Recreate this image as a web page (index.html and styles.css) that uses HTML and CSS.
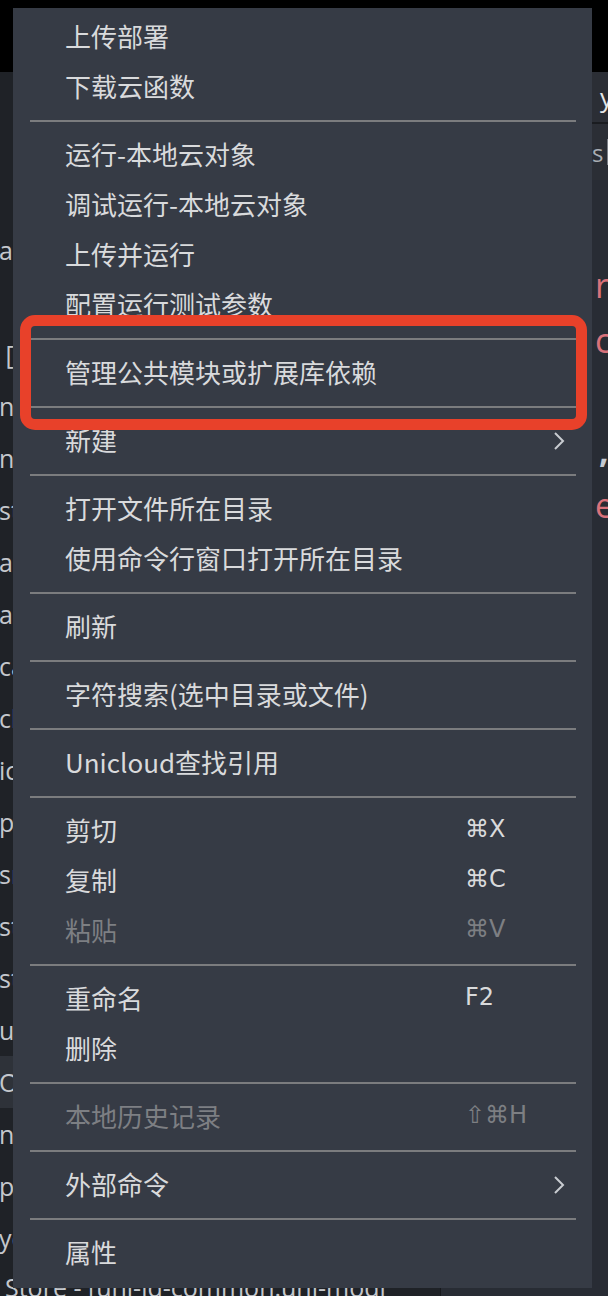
FILE: index.html
```html
<!DOCTYPE html>
<html lang="zh-CN">
<head>
  <meta charset="UTF-8" />
  <meta name="viewport" content="width=device-width, initial-scale=1" />
  <title>项目管理器 - 右键菜单</title>
  <link rel="stylesheet" href="styles.css">
</head>
<body>

  <div class="titlebar"></div>

  <main class="workspace">
    <aside class="project-tree">
      <div class="tree-row"></div>
      <div class="tree-row"></div>
      <div class="tree-row">api</div>
      <div class="tree-row"></div>
      <div class="tree-row">&nbsp;[uni-id-co]</div>
      <div class="tree-row">node_modules</div>
      <div class="tree-row">nodejs</div>
      <div class="tree-row">static</div>
      <div class="tree-row">articles</div>
      <div class="tree-row">app.vue</div>
      <div class="tree-row">cache</div>
      <div class="tree-row">client</div>
      <div class="tree-row">icons</div>
      <div class="tree-row">pages</div>
      <div class="tree-row">sıtemap</div>
      <div class="tree-row">store</div>
      <div class="tree-row">styles</div>
      <div class="tree-row">uni_modules</div>
      <div class="tree-row selected">Order</div>
      <div class="tree-row">node</div>
      <div class="tree-row">package.json</div>
      <div class="tree-row">yconfig</div>
      <div class="tree-row status-row">Store - [uni-id-common:uni-modi</div>
    </aside>

    <section class="editor">
      <div class="editor-tabs"><span class="tab-label">y</span></div>
      <div class="editor-crumbs"><span class="crumb-label">s</span><span class="crumb-box"></span></div>
      <div class="editor-body">
        <div class="code-line key">return</div>
        <div class="code-line key">code</div>
        <div class="code-line"></div>
        <div class="code-line punct">,</div>
        <div class="code-line key">err</div>
      </div>
    </section>
  </main>

  <!-- Context menu -->
  <nav class="context-menu">
    <div class="menu-item">上传部署</div>
    <div class="menu-item">下载云函数</div>
    <div class="menu-sep"></div>
    <div class="menu-item">运行-本地云对象</div>
    <div class="menu-item">调试运行-本地云对象</div>
    <div class="menu-item">上传并运行</div>
    <div class="menu-item">配置运行测试参数</div>
    <div class="menu-sep"></div>
    <div class="menu-item">管理公共模块或扩展库依赖</div>
    <div class="menu-sep"></div>
    <div class="menu-item">
      <span class="item-label">新建</span>
      <svg class="item-arrow" width="14" height="22" viewBox="0 0 14 22"><polyline points="3,3 11,11 3,19" fill="none" stroke="#c9ccd1" stroke-width="2"/></svg>
    </div>
    <div class="menu-sep"></div>
    <div class="menu-item">打开文件所在目录</div>
    <div class="menu-item">使用命令行窗口打开所在目录</div>
    <div class="menu-sep"></div>
    <div class="menu-item">刷新</div>
    <div class="menu-sep"></div>
    <div class="menu-item">字符搜索(选中目录或文件)</div>
    <div class="menu-sep"></div>
    <div class="menu-item">Unicloud查找引用</div>
    <div class="menu-sep"></div>
    <div class="menu-item"><span class="item-label">剪切</span><span class="item-key">⌘X</span></div>
    <div class="menu-item"><span class="item-label">复制</span><span class="item-key">⌘C</span></div>
    <div class="menu-item disabled"><span class="item-label">粘贴</span><span class="item-key">⌘V</span></div>
    <div class="menu-sep"></div>
    <div class="menu-item"><span class="item-label">重命名</span><span class="item-key">F2</span></div>
    <div class="menu-item">删除</div>
    <div class="menu-sep"></div>
    <div class="menu-item disabled"><span class="item-label">本地历史记录</span><span class="item-key">⇧⌘H</span></div>
    <div class="menu-sep"></div>
    <div class="menu-item">
      <span class="item-label">外部命令</span>
      <svg class="item-arrow" width="14" height="22" viewBox="0 0 14 22"><polyline points="3,3 11,11 3,19" fill="none" stroke="#c9ccd1" stroke-width="2"/></svg>
    </div>
    <div class="menu-sep"></div>
    <div class="menu-item">属性</div>
  </nav>

  <!-- Annotation box -->
  <div class="highlight-box"></div>

</body>
</html>
```

FILE: styles.css
```css
* {
  box-sizing: border-box;
  margin: 0;
  padding: 0;
}

body {
  width: 608px;
  height: 1296px;
  overflow: hidden;
  background-color: #000000;
  font-family: 'Open Sans', 'Noto Sans CJK SC', sans-serif;
  position: relative;
}

.titlebar {
  height: 72px;
  background-color: #000000;
}

.workspace {
  display: flex;
  height: 1224px;
}

/* Project tree */
.project-tree {
  width: 441px;
  flex-shrink: 0;
  background-color: #1f2227;
  padding-top: 48px;
  display: flex;
  flex-direction: column;
  border-right: 1px solid #17191d;
}

.tree-row {
  height: 52px;
  flex-shrink: 0;
  line-height: 52px;
  font-size: 25px;
  color: #c4c7cc;
  white-space: nowrap;
  overflow: hidden;
  margin-left: -1px;
}

.tree-row.selected {
  background-color: #2e3239;
}

.tree-row.status-row {
  padding-left: 6px;
  line-height: 46px;
}

/* Editor */
.editor {
  flex: 1;
  min-width: 0;
  overflow: hidden;
  background-color: #282c34;
  display: flex;
  flex-direction: column;
}

.editor-tabs {
  height: 52px;
  flex-shrink: 0;
  background-color: #2b2e35;
  border-bottom: 2px solid #1a1c20;
  display: flex;
  align-items: center;
  padding-left: 159px;
}

.tab-label {
  font-size: 26px;
  color: #e6e6e6;
}

.editor-crumbs {
  height: 56px;
  flex-shrink: 0;
  background-color: #2b2e35;
  display: flex;
  align-items: center;
  padding-left: 151px;
  gap: 4px;
  font-size: 24px;
  color: #a9adb3;
}

.crumb-box {
  width: 14px;
  height: 26px;
  border-left: 2px solid #7b7f86;
}

.editor-body {
  padding-top: 78px;
  padding-left: 154px;
}

.code-line {
  height: 55px;
  line-height: 55px;
  font-size: 34px;
  font-family: 'Open Sans', sans-serif;
  white-space: nowrap;
}

.code-line.key {
  color: #d9727b;
}

.code-line.punct {
  color: #c4c8cf;
  font-weight: bold;
  padding-left: 4px;
}

/* Context menu */
.context-menu {
  position: absolute;
  top: 8px;
  left: 13px;
  width: 579px;
  height: 1280px;
  background-color: #363b45;
  padding: 4px 0 10px;
  display: flex;
  flex-direction: column;
  font-family: 'Noto Sans CJK SC', 'Open Sans', sans-serif;
}

.menu-item {
  height: 50px;
  flex-shrink: 0;
  display: flex;
  align-items: center;
  padding-left: 52px;
  padding-right: 26px;
  padding-bottom: 4px;
  font-size: 26px;
  color: #d9dadc;
  white-space: nowrap;
}

.menu-item.disabled {
  color: #7d7f83;
}

.item-label {
  flex: 1;
}

.item-key {
  width: 101px;
  font-family: 'DejaVu Sans', 'Noto Sans CJK SC', sans-serif;
  font-size: 24px;
}

.item-arrow {
  flex-shrink: 0;
  margin-top: 4px;
}

.menu-sep {
  height: 2px;
  flex-shrink: 0;
  margin: 8px 16px 8px 17px;
  background-color: #7b7c7e;
}

/* Red annotation */
.highlight-box {
  position: absolute;
  top: 315px;
  left: 20px;
  width: 567px;
  height: 115px;
  border: 11px solid #e8412a;
  border-radius: 15px;
}
```
